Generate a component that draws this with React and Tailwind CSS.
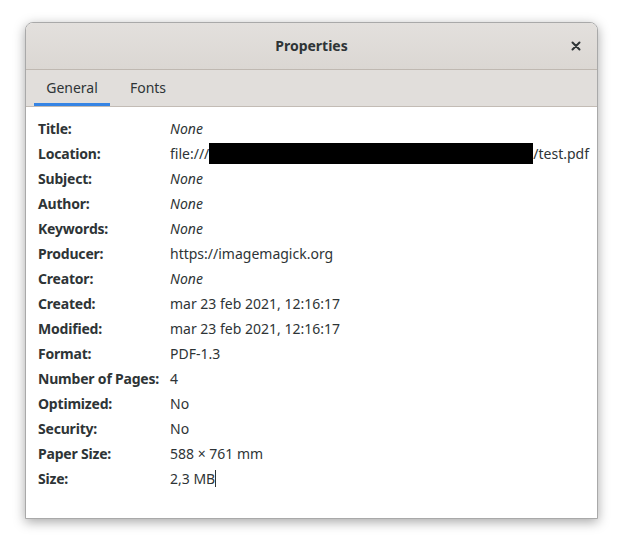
import React from 'react';

const rows = [
  ['Title:', 'None', true],
  ['Location:', 'location', false],
  ['Subject:', 'None', true],
  ['Author:', 'None', true],
  ['Keywords:', 'None', true],
  ['Producer:', 'https://imagemagick.org', false],
  ['Creator:', 'None', true],
  ['Created:', 'mar 23 feb 2021, 12:16:17', false],
  ['Modified:', 'mar 23 feb 2021, 12:16:17', false],
  ['Format:', 'PDF-1.3', false],
  ['Number of Pages:', '4', false],
  ['Optimized:', 'No', false],
  ['Security:', 'No', false],
  ['Paper Size:', '588 × 761 mm', false],
  ['Size:', 'size', false],
];

export default function App() {
  return (
    <div
      className="w-[624px] h-[548px] bg-white pt-[22px] pl-[25px] text-[#2e3436]"
      style={{ fontFamily: '"Noto Sans", "Open Sans", sans-serif' }}
    >
      <div className="w-[573px] h-[497px] flex flex-col rounded-t-[8px] bg-white border border-[#a9a9a9] shadow-[0_3px_12px_rgba(0,0,0,0.35)] overflow-hidden">
        {/* Header bar */}
        <div className="h-[47px] shrink-0 flex items-center relative bg-gradient-to-b from-[#e3e0dd] to-[#dbd7d3] border-b border-[#bfb8b1]">
          <div className="flex-1 text-center text-[14px] font-bold pb-[2px]">Properties</div>
          <button className="absolute right-[12px] top-[14px] w-[18px] h-[18px] flex items-center justify-center">
            <svg width="10" height="10" viewBox="0 0 10 10">
              <path d="M1.5 1.5 L8.5 8.5 M8.5 1.5 L1.5 8.5" stroke="#2e3436" strokeWidth="2" strokeLinecap="round" />
            </svg>
          </button>
        </div>

        {/* Tabs */}
        <div className="h-[37px] shrink-0 flex items-stretch bg-[#e1dedb] border-b border-[#c3bcb5] pl-[8px]">
          <div className="relative w-[76px] flex items-center justify-center text-[14px] pb-[2px]">
            General
            <div className="absolute left-0 right-0 bottom-0 h-[3px] bg-[#3584e4]" />
          </div>
          <div className="w-[76px] flex items-center justify-center text-[14px] pb-[2px]">Fonts</div>
        </div>

        {/* Properties list */}
        <div className="flex-1 pt-[9px] pl-[12px]">
          {rows.map(([label, value, italic]) => (
            <div key={label} className="h-[25px] grid grid-cols-[132px_1fr] items-center text-[14px]">
              <div className="font-bold whitespace-nowrap tracking-[-0.2px]">{label}</div>
              {value === 'location' ? (
                <div className="flex items-center">
                  <span>file:///</span>
                  <span className="w-[324px] h-[21px] bg-black" />
                  <span>/test.pdf</span>
                </div>
              ) : value === 'size' ? (
                <div className="flex items-center">
                  <span>2,3 MB</span>
                  <span className="w-px h-[17px] bg-[#2e3436]" />
                </div>
              ) : (
                <div className={italic ? 'italic' : ''}>{value}</div>
              )}
            </div>
          ))}
        </div>
      </div>
    </div>
  );
}
